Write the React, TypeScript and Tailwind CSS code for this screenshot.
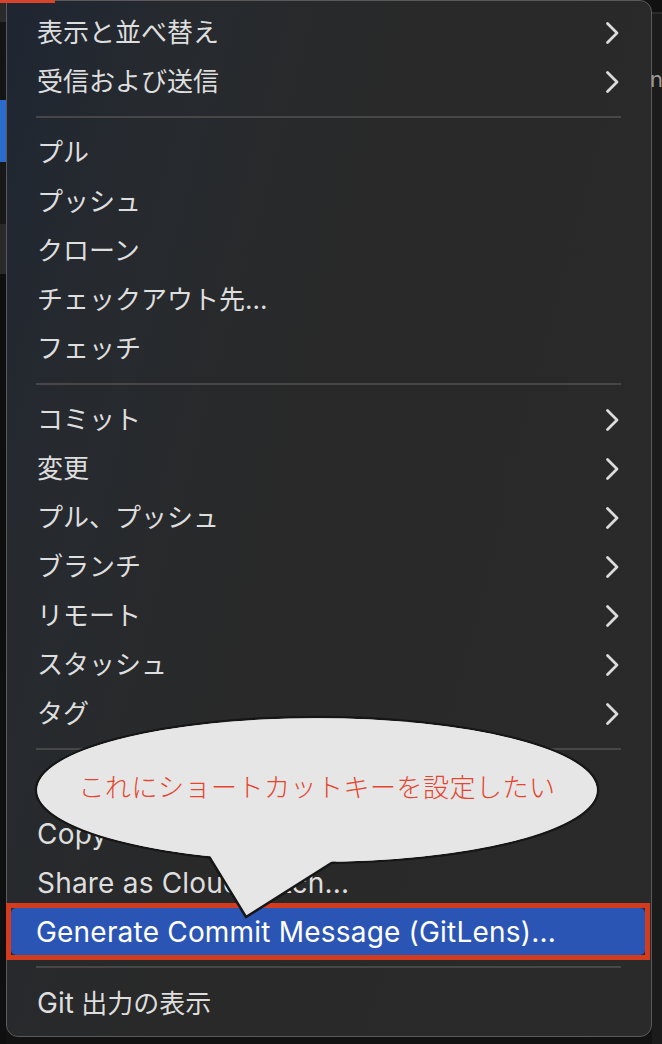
import { ReactNode } from "react";

type Item = { label: ReactNode; sub?: boolean; active?: boolean; latin?: boolean };

const groups: Item[][] = [
  [
    { label: "表示と並べ替え", sub: true },
    { label: "受信および送信", sub: true },
  ],
  [
    { label: "プル" },
    { label: "プッシュ" },
    { label: "クローン" },
    { label: "チェックアウト先..." },
    { label: "フェッチ" },
  ],
  [
    { label: "コミット", sub: true },
    { label: "変更", sub: true },
    { label: "プル、プッシュ", sub: true },
    { label: "ブランチ", sub: true },
    { label: "リモート", sub: true },
    { label: "スタッシュ", sub: true },
    { label: "タグ", sub: true },
  ],
  [
    { label: "Copy Changes (Patch)", latin: true },
    { label: "Copy", latin: true },
    { label: "Share as Cloud Patch...", latin: true },
    { label: "Generate Commit Message (GitLens)...", active: true, latin: true },
  ],
  [
    {
      label: (
        <>
          <span className="text-[28px]">Git</span> 出力の表示
        </>
      ),
    },
  ],
];

function Chevron() {
  return (
    <svg width="15" height="24" viewBox="0 0 15 24" className="shrink-0">
      <polyline
        points="2.5,2.5 12,12 2.5,21.5"
        fill="none"
        stroke="#dcdcdc"
        strokeWidth="2.8"
        strokeLinecap="round"
        strokeLinejoin="round"
      />
    </svg>
  );
}

function Row({ item }: { item: Item }) {
  const size = item.latin ? "text-[28px] tracking-[0.2px]" : "text-[26px]";
  if (item.active) {
    return (
      <div className="h-[49px] flex items-center">
        <div className="-ml-[1px] mr-[4px] w-full h-[57px] shrink-0 border-[5px] border-[#d43c20]">
          <div className={`h-[47px] rounded-[5px] bg-[#2b55b5] pl-[25px] flex items-center text-white ${size}`}>
            {item.label}
          </div>
        </div>
      </div>
    );
  }
  return (
    <div className={`h-[49px] pl-[30px] pr-[31px] flex items-center justify-between ${size}`}>
      <span>{item.label}</span>
      {item.sub && <Chevron />}
    </div>
  );
}

function Separator() {
  return (
    <div className="h-[22px] flex items-center pl-[29px] pr-[30px]">
      <div className="h-[2px] w-full bg-[#474747]" />
    </div>
  );
}

function Bubble(): ReactNode {
  return (
    <div className="absolute left-0 top-0 w-[662px] h-[1044px] pointer-events-none">
      <svg width="662" height="1044" className="absolute left-0 top-0">
        <ellipse cx="317" cy="790" rx="281" ry="73" fill="#e6e6e6" stroke="#161616" strokeWidth="2.5" />
        <polygon points="205,850 246,917 352,850" fill="#e6e6e6" stroke="#161616" strokeWidth="2.5" strokeLinejoin="miter" />
        <ellipse cx="317" cy="790" rx="279.8" ry="71.8" fill="#e6e6e6" />
      </svg>
      <div className="absolute left-[37px] top-[770px] w-[560px] h-[36px] flex items-center justify-center text-[26px] leading-[36px] text-[#e4452f] font-light tracking-[0.5px]">
        これにショートカットキーを設定したい
      </div>
    </div>
  );
}

export default function App() {
  return (
    <div
      className="relative w-[662px] h-[1044px] overflow-hidden bg-[#121212] flex leading-none text-[#dedede]"
      style={{ fontFamily: '"Inter", "Noto Sans CJK JP", sans-serif' }}
    >
      {/* left strip of the window behind */}
      <div className="w-[6px] shrink-0 flex flex-col">
        <div className="h-[22px] bg-[#2a2a2a]" />
        <div className="h-[78px] bg-[#141414]" />
        <div className="h-[62px] bg-[#2b6bc9]" />
        <div className="h-[62px] bg-[#181818]" />
        <div className="h-[50px] bg-[#2a2a2a]" />
        <div className="flex-1 bg-[#0f0f0f]" />
      </div>

      {/* context menu */}
      <div className="w-[646px] h-[1037px] shrink-0 rounded-b-[12px] rounded-tr-[12px] border border-[#5a5a5a] bg-[linear-gradient(105deg,#1f2632_0%,#262a2f_18%,#292929_45%,#2a2a2a_100%)] pt-[7px]">
        {groups.map((g, gi) => (
          <div key={gi}>
            {gi > 0 && <Separator />}
            {g.map((item, i) => (
              <Row key={i} item={item} />
            ))}
          </div>
        ))}
      </div>

      {/* right strip */}
      <div className="flex-1 bg-[#1b1b1b] flex flex-col">
        <div className="h-[12px] bg-[#111]" />
        <div className="h-[2px] bg-[#2a2a2a]" />
        <div className="h-[54px]" />
        <div className="text-[#9a9a9a] text-[22px] -ml-[2px]">n</div>
      </div>

      <div className="absolute left-0 top-0 w-[55px] h-[3px] bg-[#d6452b]" />
      <Bubble />
    </div>
  );
}
